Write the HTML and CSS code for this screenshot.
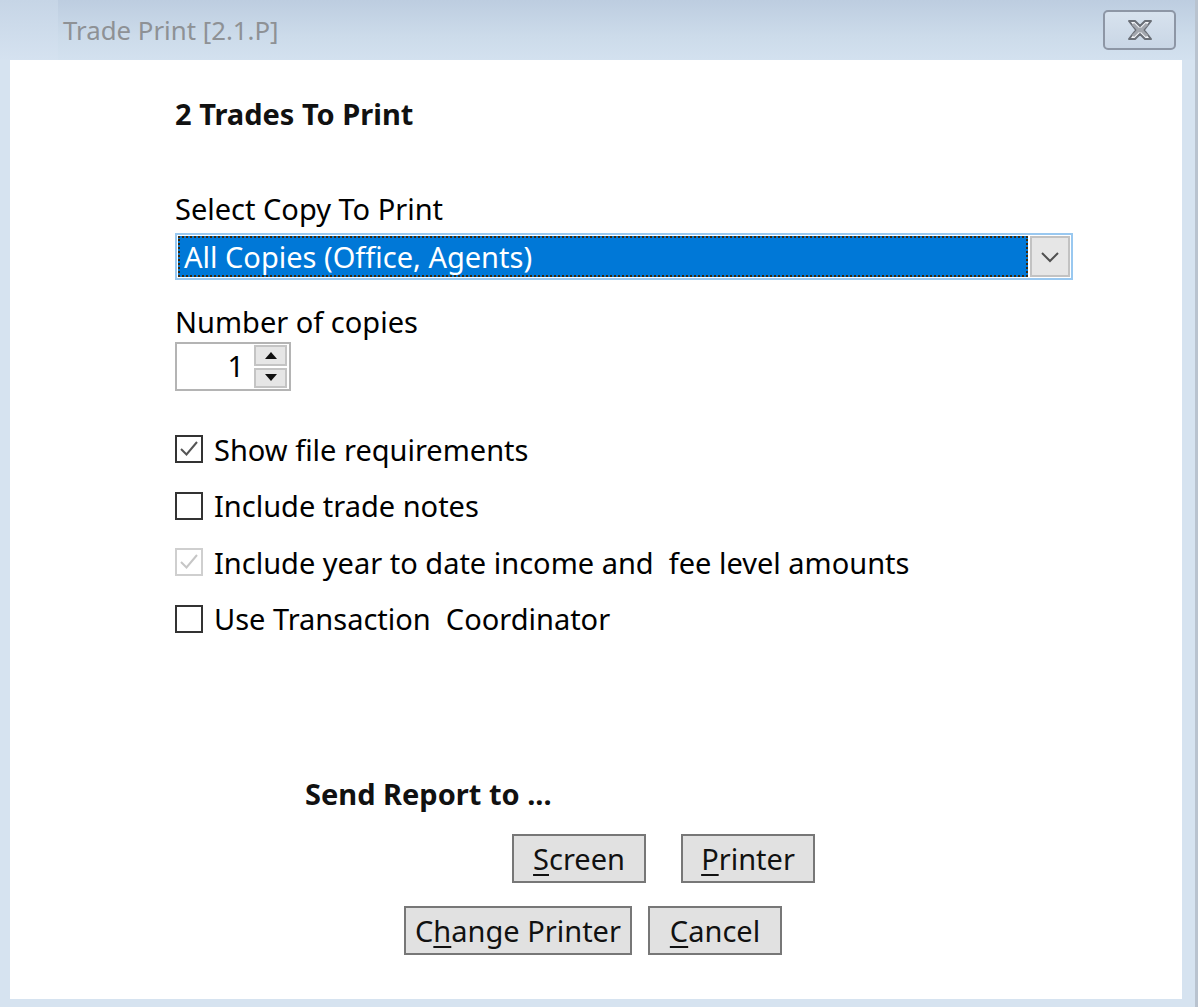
FILE: index.html
```html
<!DOCTYPE html>
<html lang="en">
<head>
    <meta charset="UTF-8">
    <meta name="viewport" content="width=device-width, initial-scale=1.0">
    <title>Trade Print [2.1.P]</title>
    <link rel="stylesheet" href="styles.css">
</head>
<body>
    <div class="window">
        <div class="titlebar">
            <div class="title-icon-area"></div>
            <span class="title">Trade Print [2.1.P]</span>
            <button class="close-btn" aria-label="Close">
                <svg width="32" height="22" viewBox="0 0 32 22">
                    <path d="M5 2 L11 2 L16 7 L21 2 L27 2 L20 11 L27 20 L21 20 L16 15 L11 20 L5 20 L12 11 Z"
                          fill="#f4f6f9" stroke="#6a6f77" stroke-width="2" stroke-linejoin="round"/>
                    <path d="M9 5 L16 12 L23 5 M9 17 L16 10 L23 17" stroke="#a3a7ae" stroke-width="3" fill="none"/>
                </svg>
            </button>
        </div>

        <div class="client">
            <h1 class="heading">2 Trades To Print</h1>

            <label class="field-label">Select Copy To Print</label>
            <div class="combo">
                <div class="combo-value"><span>All Copies (Office, Agents)</span></div>
                <div class="combo-arrow">
                    <svg width="20" height="12" viewBox="0 0 20 12">
                        <path d="M2 2 L10 10 L18 2" fill="none" stroke="#505050" stroke-width="2"/>
                    </svg>
                </div>
            </div>

            <label class="field-label copies-label">Number of copies</label>
            <div class="spinner">
                <div class="spin-value">1</div>
                <div class="spin-buttons">
                    <div class="spin-btn"><svg width="12" height="7" viewBox="0 0 12 7"><path d="M0 7 L6 0 L12 7 Z" fill="#111"/></svg></div>
                    <div class="spin-btn"><svg width="12" height="7" viewBox="0 0 12 7"><path d="M0 0 L6 7 L12 0 Z" fill="#111"/></svg></div>
                </div>
            </div>

            <div class="options">
                <div class="option">
                    <span class="check checked">
                        <svg width="22" height="22" viewBox="0 0 22 22"><path d="M3 11 L8.5 16.5 L19 4" fill="none" stroke="#555" stroke-width="2"/></svg>
                    </span>
                    <span>Show file requirements</span>
                </div>
                <div class="option">
                    <span class="check"></span>
                    <span>Include trade notes</span>
                </div>
                <div class="option">
                    <span class="check disabled">
                        <svg width="22" height="22" viewBox="0 0 22 22"><path d="M3 11 L8.5 16.5 L19 4" fill="none" stroke="#c6c6c6" stroke-width="2"/></svg>
                    </span>
                    <span>Include year to date income and&nbsp; fee level amounts</span>
                </div>
                <div class="option">
                    <span class="check"></span>
                    <span>Use Transaction&nbsp; Coordinator</span>
                </div>
            </div>

            <h2 class="send-heading">Send Report to ...</h2>
            <div class="btn-row row-top">
                <button class="win-btn"><u>S</u>creen</button>
                <button class="win-btn printer-btn"><u>P</u>rinter</button>
            </div>
            <div class="btn-row row-bottom">
                <button class="win-btn wide">C<u>h</u>ange Printer</button>
                <button class="win-btn cancel-btn"><u>C</u>ancel</button>
            </div>
        </div>
    </div>
</body>
</html>
```

FILE: styles.css
```css
* {
    margin: 0;
    padding: 0;
    box-sizing: border-box;
}

html, body {
    height: 100%;
}

body {
    font-family: 'Noto Sans', 'Open Sans', sans-serif;
    background: #d6e3f0;
    overflow: hidden;
}

.window {
    width: 1198px;
    height: 1007px;
    display: flex;
    flex-direction: column;
    border-right: 3px solid #b9c3cf;
    background: #d6e3f0;
}

.titlebar {
    height: 60px;
    display: flex;
    align-items: center;
    background: linear-gradient(180deg, #bdcde0 0%, #ccdbea 60%, #d3e1ef 100%);
}

.title-icon-area {
    width: 58px;
    height: 60px;
    background: linear-gradient(180deg, #c6d5e6 0%, #d5e2f0 100%);
}

.title {
    margin-left: 5px;
    color: #8e9195;
    font-size: 25.8px;
}

.close-btn {
    margin-left: auto;
    margin-right: 19px;
    width: 73px;
    height: 40px;
    border: 2px solid #8d96a5;
    border-radius: 5px;
    background: linear-gradient(180deg, #d7e2ee 0%, #c9d6e5 100%);
    display: flex;
    align-items: center;
    justify-content: center;
}

.client {
    flex: 1;
    background: #fff;
    margin: 0 13px 8px 10px;
    padding: 37px 0 0 165px;
    color: #000;
    font-size: 29px;
}

.heading {
    font-size: 29px;
    font-weight: 700;
    line-height: 34px;
    color: #111;
}

.field-label {
    display: block;
    line-height: 34px;
    margin-top: 61px;
}

.copies-label {
    margin-top: 25px;
}

.combo {
    margin-top: 7px;
    width: 898px;
    height: 47px;
    border: 2px solid #99c8f0;
    display: flex;
    padding: 1px;
}

.combo-value {
    flex: 1;
    background: #0078d7;
    border: 2px dotted #3a2a10;
    color: #fff;
    display: flex;
    align-items: center;
    padding-left: 4px;
}

.combo-arrow {
    width: 40px;
    margin-left: 2px;
    background: #e6e6e6;
    border: 2px solid #c2c2c2;
    display: flex;
    align-items: center;
    justify-content: center;
}

.spinner {
    margin-top: 3px;
    width: 116px;
    height: 49px;
    border: 2px solid #b4b4b4;
    display: flex;
}

.spin-value {
    flex: 1;
    text-align: right;
    padding-right: 9px;
    line-height: 43px;
}

.spin-buttons {
    width: 36px;
    display: flex;
    flex-direction: column;
    gap: 2px;
    padding: 1px 2px 1px 1px;
}

.spin-btn {
    flex: 1;
    background: #e6e6e6;
    border: 2px solid #c4c4c4;
    display: flex;
    align-items: center;
    justify-content: center;
}

.options {
    margin-top: 30px;
    display: flex;
    flex-direction: column;
}

.option {
    height: 56.5px;
    display: flex;
    align-items: center;
    gap: 11px;
}

.check {
    width: 28px;
    height: 28px;
    border: 2px solid #333;
    display: flex;
    align-items: center;
    justify-content: center;
    flex-shrink: 0;
}

.check.disabled {
    border-color: #cfcfcf;
}

.send-heading {
    margin-top: 130px;
    margin-left: 130px;
    font-size: 29px;
    font-weight: 700;
    line-height: 34px;
    color: #111;
}

.btn-row {
    display: flex;
}

.row-top {
    margin-top: 23px;
    margin-left: 337px;
    gap: 35px;
}

.row-bottom {
    margin-top: 23px;
    margin-left: 229px;
    gap: 16px;
}

.win-btn {
    width: 134px;
    height: 49px;
    border: 2px solid #777;
    background: #e1e1e1;
    font-family: inherit;
    font-size: 29px;
    color: #111;
}

.win-btn.wide {
    width: 228px;
}

.win-btn u {
    text-underline-offset: 4px;
    text-decoration-thickness: 2px;
}
```
